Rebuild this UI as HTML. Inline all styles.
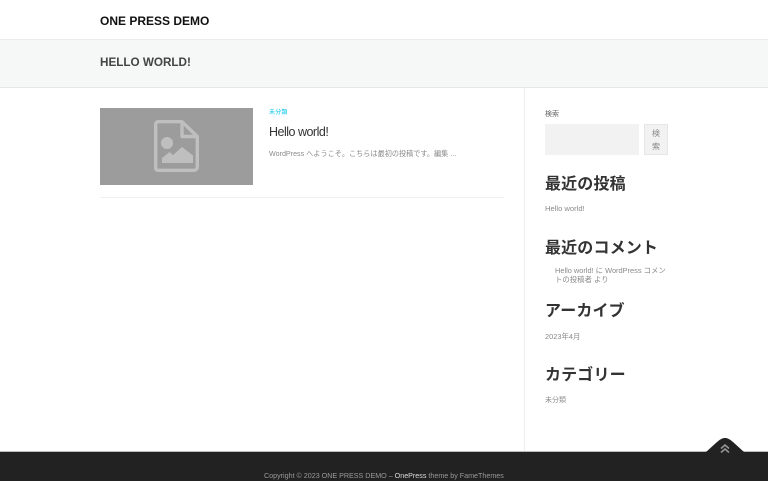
<!DOCTYPE html>
<html lang="ja">
<head>
<meta charset="utf-8">
<title>Hello world! – ONE PRESS DEMO</title>
<style>
html,body{margin:0;padding:0;background:#fff;}
body{position:relative;width:768px;height:481px;overflow:hidden;font-family:"Liberation Sans","Noto Sans CJK JP",sans-serif;color:#777;}
.a{position:absolute;white-space:nowrap;line-height:1;}
h3.a{margin:0;font-size:16px;letter-spacing:.15px;font-weight:700;color:#333;font-family:"Liberation Sans","Noto Sans CJK JP",sans-serif;}
.s{font-size:7.4px;color:#8a8a8a;}
</style>
</head>
<body>
<div class="a" style="left:100px;top:15px;font-size:12px;font-weight:700;color:#111;">ONE PRESS DEMO</div>
<div class="a" style="left:0;top:39px;width:768px;height:49px;background:#f6f7f7;border-top:1px solid #ececec;border-bottom:1px solid #e6e6e6;box-sizing:border-box;"></div>
<div class="a" style="left:100px;top:57px;font-size:11.7px;font-weight:700;color:#444;">HELLO WORLD!</div>

<div class="a" style="left:524px;top:88px;width:1px;height:364px;background:#eee;"></div>

<div class="a" style="left:100px;top:108px;width:153px;height:77px;background:#9c9c9c;"></div>
<svg class="a" style="left:154px;top:120px;" width="45" height="52" viewBox="0 0 45 52">
<path fill="none" stroke="#bfbfbf" stroke-width="3.4" stroke-linejoin="round" d="M4 1.700H28L43.300 16.500V47a3.300 3.300 0 0 1-3.300 3.300H4A2.500 2.500 0 0 1 1.700 47V4A2.500 2.500 0 0 1 4 1.700Z"/>
<path fill="none" stroke="#bfbfbf" stroke-width="3.400" stroke-linejoin="round" d="M28 2V16.500H43"/>
<circle cx="13" cy="23" r="6" fill="#bfbfbf"/>
<path fill="#bfbfbf" d="M8 43V38L15.500 32L19 35L28 27L39 35.500V43Z"/>
</svg>

<div class="a" style="left:269px;top:110px;font-size:6px;color:#03c4eb;letter-spacing:.2px;">未分類</div>
<div class="a" style="left:269px;top:126px;font-size:12.5px;color:#333;letter-spacing:-.5px;">Hello world!</div>
<div class="a" style="left:269px;top:151px;font-size:7.15px;color:#8a8a8a;">WordPress へようこそ。こちらは最初の投稿です。編集 ...</div>
<div class="a" style="left:100px;top:197px;width:404px;height:1px;background:#f0f0f0;"></div>

<div class="a" style="left:545px;top:111px;font-size:7px;color:#666;">検索</div>
<div class="a" style="left:545px;top:124px;width:94px;height:31px;background:#f2f2f2;"></div>
<div class="a" style="left:644px;top:124px;width:24px;height:31px;background:#f2f2f2;border:1px solid #e6e6e6;box-sizing:border-box;"></div>
<div class="a" style="left:652px;top:127px;font-size:8px;line-height:13px;width:9px;white-space:normal;color:#888;">検索</div>

<h3 class="a" style="left:545px;top:177px;">最近の投稿</h3>
<div class="a s" style="left:545px;top:205px;font-size:7.6px;">Hello world!</div>

<h3 class="a" style="left:545px;top:241px;">最近のコメント</h3>
<div class="a s" style="left:555px;top:266px;line-height:9px;">Hello world! に WordPress コメン<br>トの投稿者 より</div>

<h3 class="a" style="left:545px;top:304px;">アーカイブ</h3>
<div class="a s" style="left:545px;top:333px;">2023年4月</div>

<h3 class="a" style="left:545px;top:368px;">カテゴリー</h3>
<div class="a s" style="left:545px;top:397px;font-size:7px;">未分類</div>

<div class="a" style="left:0;top:451px;width:768px;height:30px;background:#222;border-top:1px solid #bbb;box-sizing:border-box;"></div>
<svg class="a" style="left:704px;top:436px;" width="42" height="17" viewBox="0 0 42 17">
<path fill="#222" d="M2 16L13 6C17 2.500 19 2 21 2S25 2.500 29 6L40 16V17H2Z"/>
<path fill="none" stroke="#999" stroke-width="1.500" d="M17 12.500L21 9L25 12.500M17 16.500L21 13L25 16.500"/>
</svg>
<div class="a" style="left:264px;top:473px;font-size:7.15px;color:#999;">Copyright © 2023 ONE PRESS DEMO – <span style="color:#ddd;">OnePress</span> theme by FameThemes</div>
</body>
</html>
